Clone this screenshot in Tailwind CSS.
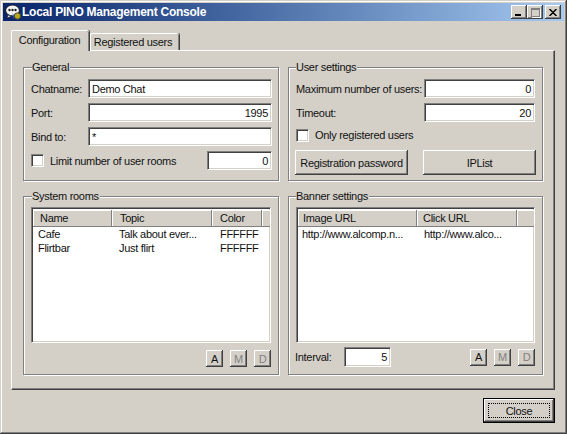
<!DOCTYPE html>
<html lang="en">
<head>
    <meta charset="UTF-8">
    <title>Local PINO Management Console</title>
    <script src="https://cdn.jsdelivr.net/npm/@tailwindcss/browser@4"></script>
</head>
<body class="bg-[#d4d0c8]">
<!-- Window frame -->
<div class="w-[567px] h-[434px] flex flex-col p-[3px] bg-[#d4d0c8] text-[#111] font-['Liberation_Sans',Arial,sans-serif] text-[11px] tracking-[-0.3px] leading-[14px] overflow-hidden shadow-[inset_-1px_-1px_0_#404040,inset_1px_1px_0_#d4d0c8,inset_-2px_-2px_0_#808080,inset_2px_2px_0_#fff]">

    <!-- Title bar -->
    <div class="h-[18px] shrink-0 flex items-center pl-[2px] pr-[3px] bg-gradient-to-r from-[#0a246a] to-[#a6caf0]">
        <svg class="w-[16px] h-[16px] shrink-0" viewBox="0 0 16 16">
            <ellipse cx="7.500" cy="6.500" rx="7" ry="5.500" fill="#f4f4f4" stroke="#1a2030" stroke-width="1.200"/>
            <path d="M3 11l-1 3 5-2z" fill="#f4f4f4" stroke="#1a2030" stroke-width=".7"/>
            <circle cx="4.500" cy="6" r="1.200" fill="#222"/>
            <circle cx="7.500" cy="6" r="1.200" fill="#222"/>
            <circle cx="10.500" cy="6" r="1.200" fill="#222"/>
            <circle cx="12.500" cy="12" r="3.200" fill="#b8a818" stroke="#443"/>
            <path d="M7.500 9l2 3-1 3z" fill="#3060c0"/>
        </svg>
        <span class="ml-[1px] text-white font-bold text-[12px] tracking-[-0.25px]">Local PINO Management Console</span>
        <div class="ml-auto flex">
            <div class="w-[16px] h-[14px] flex items-end pl-[4px] pb-[3px] bg-[#d4d0c8] shadow-[inset_-1px_-1px_0_#404040,inset_1px_1px_0_#fff,inset_-2px_-2px_0_#808080]">
                <div class="w-[6px] h-[2px] bg-black"></div>
            </div>
            <div class="w-[16px] h-[14px] flex items-center justify-center bg-[#d4d0c8] shadow-[inset_-1px_-1px_0_#404040,inset_1px_1px_0_#fff,inset_-2px_-2px_0_#808080]">
                <div class="w-[9px] h-[9px] border border-[#808080] border-t-2 shadow-[1px_1px_0_#fff]"></div>
            </div>
            <div class="ml-[2px] w-[16px] h-[14px] flex items-center justify-center bg-[#d4d0c8] shadow-[inset_-1px_-1px_0_#404040,inset_1px_1px_0_#fff,inset_-2px_-2px_0_#808080]">
                <svg class="w-[8px] h-[7px]" viewBox="0 0 8 7"><path d="M0.500 0l3.500 3.500L7.500 0M0.500 7l3.500-3.500L7.500 7" fill="none" stroke="#000" stroke-width="1.500"/></svg>
            </div>
        </div>
    </div>

    <!-- Tabs -->
    <div class="flex items-end h-[29px] shrink-0 pl-[8px] relative z-10">
        <div class="h-[21px] w-[78px] -mb-px pt-[2px] pr-[2px] text-center bg-[#d4d0c8] rounded-t-[2px] border-t border-l border-white shadow-[inset_-1px_0_0_#808080,1px_0_0_#404040] border-r-0">Configuration</div>
        <div class="h-[17px] w-[89px] ml-[1px] pt-px pr-[4px] text-center bg-[#d4d0c8] rounded-t-[2px] border-t border-l border-white shadow-[inset_-1px_0_0_#808080,1px_0_0_#404040]">Registered users</div>
    </div>

    <!-- Tab panel -->
    <div class="ml-[8px] w-[544px] h-[340px] shrink-0 pl-[11px] pt-[16px] grid grid-cols-[256px_255px] grid-rows-[114px_179px] gap-x-[9px] gap-y-[15px] border-t border-l border-white border-r border-b border-r-[#404040] border-b-[#404040] shadow-[inset_-1px_-1px_0_#808080]">

        <!-- General -->
        <div class="relative pl-[7px] pr-[6px] pt-[11px] flex flex-col gap-[5px] border border-[#808080] shadow-[1px_1px_0_#fff,inset_1px_1px_0_#fff]">
            <span class="absolute left-[8px] -top-[8px] bg-[#d4d0c8] pr-[1px]">General</span>
            <div class="flex items-center">
                <span class="w-[57px]">Chatname:</span>
                <div class="flex-1 h-[19px] px-[3px] pt-[2px] bg-white border border-[#808080] border-r-white border-b-white shadow-[inset_1px_1px_0_#404040,inset_-1px_-1px_0_#d4d0c8]">Demo Chat</div>
            </div>
            <div class="flex items-center">
                <span class="w-[57px]">Port:</span>
                <div class="flex-1 h-[19px] px-[3px] pt-[2px] text-right bg-white border border-[#808080] border-r-white border-b-white shadow-[inset_1px_1px_0_#404040,inset_-1px_-1px_0_#d4d0c8]">1995</div>
            </div>
            <div class="flex items-center">
                <span class="w-[57px]">Bind to:</span>
                <div class="flex-1 h-[19px] px-[3px] pt-[2px] bg-white border border-[#808080] border-r-white border-b-white shadow-[inset_1px_1px_0_#404040,inset_-1px_-1px_0_#d4d0c8]">*</div>
            </div>
            <div class="flex items-center">
                <div class="w-[13px] h-[13px] bg-white border border-[#808080] border-r-white border-b-white shadow-[inset_1px_1px_0_#404040,inset_-1px_-1px_0_#d4d0c8]"></div>
                <span class="ml-[6px]">Limit number of user rooms</span>
                <div class="ml-auto w-[65px] h-[19px] px-[3px] pt-[2px] text-right bg-white border border-[#808080] border-r-white border-b-white shadow-[inset_1px_1px_0_#404040,inset_-1px_-1px_0_#d4d0c8]">0</div>
            </div>
        </div>

        <!-- User settings -->
        <div class="relative pl-[7px] pr-[7px] pt-[11px] flex flex-col border border-[#808080] shadow-[1px_1px_0_#fff,inset_1px_1px_0_#fff]">
            <span class="absolute left-[7px] -top-[8px] bg-[#d4d0c8] pr-[1px]">User settings</span>
            <div class="flex items-center">
                <span class="w-[128px] whitespace-nowrap">Maximum number of users:</span>
                <div class="flex-1 h-[19px] px-[3px] pt-[2px] text-right bg-white border border-[#808080] border-r-white border-b-white shadow-[inset_1px_1px_0_#404040,inset_-1px_-1px_0_#d4d0c8]">0</div>
            </div>
            <div class="flex items-center mt-[5px]">
                <span class="w-[128px]">Timeout:</span>
                <div class="flex-1 h-[19px] px-[3px] pt-[2px] text-right bg-white border border-[#808080] border-r-white border-b-white shadow-[inset_1px_1px_0_#404040,inset_-1px_-1px_0_#d4d0c8]">20</div>
            </div>
            <div class="flex items-center mt-[6px]">
                <div class="w-[13px] h-[13px] bg-white border border-[#808080] border-r-white border-b-white shadow-[inset_1px_1px_0_#404040,inset_-1px_-1px_0_#d4d0c8]"></div>
                <span class="ml-[6px]">Only registered users</span>
            </div>
            <div class="grid grid-cols-[113px_113px] gap-x-[15px] mt-[8px] -ml-px">
                <div class="h-[25px] flex items-center justify-center bg-[#d4d0c8] shadow-[inset_-1px_-1px_0_#404040,inset_1px_1px_0_#fff,inset_-2px_-2px_0_#808080]">Registration password</div>
                <div class="h-[25px] flex items-center justify-center bg-[#d4d0c8] shadow-[inset_-1px_-1px_0_#404040,inset_1px_1px_0_#fff,inset_-2px_-2px_0_#808080]">IPList</div>
            </div>
        </div>

        <!-- System rooms -->
        <div class="relative pl-[7px] pr-[7px] pt-[10px] flex flex-col border border-[#808080] shadow-[1px_1px_0_#fff,inset_1px_1px_0_#fff]">
            <span class="absolute left-[8px] -top-[8px] bg-[#d4d0c8] pr-[1px]">System rooms</span>
            <div class="h-[136px] bg-white border border-[#808080] border-r-white border-b-white shadow-[inset_1px_1px_0_#404040,inset_-1px_-1px_0_#d4d0c8] pl-[1px] pt-[2px]">
                <div class="flex h-[17px] bg-[#d4d0c8] border-b border-[#808080]">
                    <div class="w-[79px] pl-[7px] pt-[1px] border-r border-[#808080] shadow-[inset_1px_1px_0_#fff]">Name</div>
                    <div class="w-[100px] pl-[8px] pt-[1px] border-r border-[#808080] shadow-[inset_1px_1px_0_#fff]">Topic</div>
                    <div class="w-[50px] pl-[8px] pt-[1px] border-r border-[#808080] shadow-[inset_1px_1px_0_#fff]">Color</div>
                    <div class="flex-1 shadow-[inset_1px_1px_0_#fff]"></div>
                </div>
                <div class="grid grid-cols-[79px_100px_50px] pl-[5px]">
                    <span>Cafe</span><span class="pl-[2px]">Talk about ever...</span><span class="pl-[3px]">FFFFFF</span>
                    <span>Flirtbar</span><span class="pl-[2px]">Just flirt</span><span class="pl-[3px]">FFFFFF</span>
                </div>
            </div>
            <div class="flex justify-end gap-[7px] mt-[7px]">
                <div class="w-[17px] h-[17px] flex items-center justify-center bg-[#d4d0c8] shadow-[inset_-1px_-1px_0_#404040,inset_1px_1px_0_#fff,inset_-2px_-2px_0_#808080]">A</div>
                <div class="w-[17px] h-[17px] flex items-center justify-center text-[#808080] bg-[#d4d0c8] shadow-[inset_-1px_-1px_0_#404040,inset_1px_1px_0_#fff,inset_-2px_-2px_0_#808080]">M</div>
                <div class="w-[17px] h-[17px] flex items-center justify-center text-[#808080] bg-[#d4d0c8] shadow-[inset_-1px_-1px_0_#404040,inset_1px_1px_0_#fff,inset_-2px_-2px_0_#808080]">D</div>
            </div>
        </div>

        <!-- Banner settings -->
        <div class="relative pl-[7px] pr-[7px] pt-[10px] flex flex-col border border-[#808080] shadow-[1px_1px_0_#fff,inset_1px_1px_0_#fff]">
            <span class="absolute left-[7px] -top-[8px] bg-[#d4d0c8] pr-[1px]">Banner settings</span>
            <div class="h-[136px] bg-white border border-[#808080] border-r-white border-b-white shadow-[inset_1px_1px_0_#404040,inset_-1px_-1px_0_#d4d0c8] pl-[1px] pt-[2px]">
                <div class="flex h-[17px] bg-[#d4d0c8] border-b border-[#808080]">
                    <div class="w-[119px] pl-[5px] pt-[1px] border-r border-[#808080] shadow-[inset_1px_1px_0_#fff]">Image URL</div>
                    <div class="w-[100px] pl-[6px] pt-[1px] border-r border-[#808080] shadow-[inset_1px_1px_0_#fff]">Click URL</div>
                    <div class="flex-1 shadow-[inset_1px_1px_0_#fff]"></div>
                </div>
                <div class="grid grid-cols-[119px_100px] pl-[4px]">
                    <span>http://www.alcomp.n...</span><span class="pl-[3px]">http://www.alco...</span>
                </div>
            </div>
            <div class="flex items-center mt-[4px] -ml-px">
                <span class="w-[49px]">Interval:</span>
                <div class="w-[47px] h-[20px] px-[3px] pt-[2px] text-right bg-white border border-[#808080] border-r-white border-b-white shadow-[inset_1px_1px_0_#404040,inset_-1px_-1px_0_#d4d0c8]">5</div>
                <div class="ml-auto flex gap-[7px]">
                    <div class="w-[17px] h-[17px] flex items-center justify-center bg-[#d4d0c8] shadow-[inset_-1px_-1px_0_#404040,inset_1px_1px_0_#fff,inset_-2px_-2px_0_#808080]">A</div>
                    <div class="w-[17px] h-[17px] flex items-center justify-center text-[#808080] bg-[#d4d0c8] shadow-[inset_-1px_-1px_0_#404040,inset_1px_1px_0_#fff,inset_-2px_-2px_0_#808080]">M</div>
                    <div class="w-[17px] h-[17px] flex items-center justify-center text-[#808080] bg-[#d4d0c8] shadow-[inset_-1px_-1px_0_#404040,inset_1px_1px_0_#fff,inset_-2px_-2px_0_#808080]">D</div>
                </div>
            </div>
        </div>
    </div>

    <!-- Footer -->
    <div class="flex justify-end mt-[8px] mr-[9px]">
        <div class="w-[72px] h-[25px] p-[4px] bg-[#d4d0c8] border border-black shadow-[inset_-1px_-1px_0_#404040,inset_1px_1px_0_#fff,inset_-2px_-2px_0_#808080]">
            <div class="h-full flex items-center justify-center border border-dotted border-black">Close</div>
        </div>
    </div>
</div>
</body>
</html>
